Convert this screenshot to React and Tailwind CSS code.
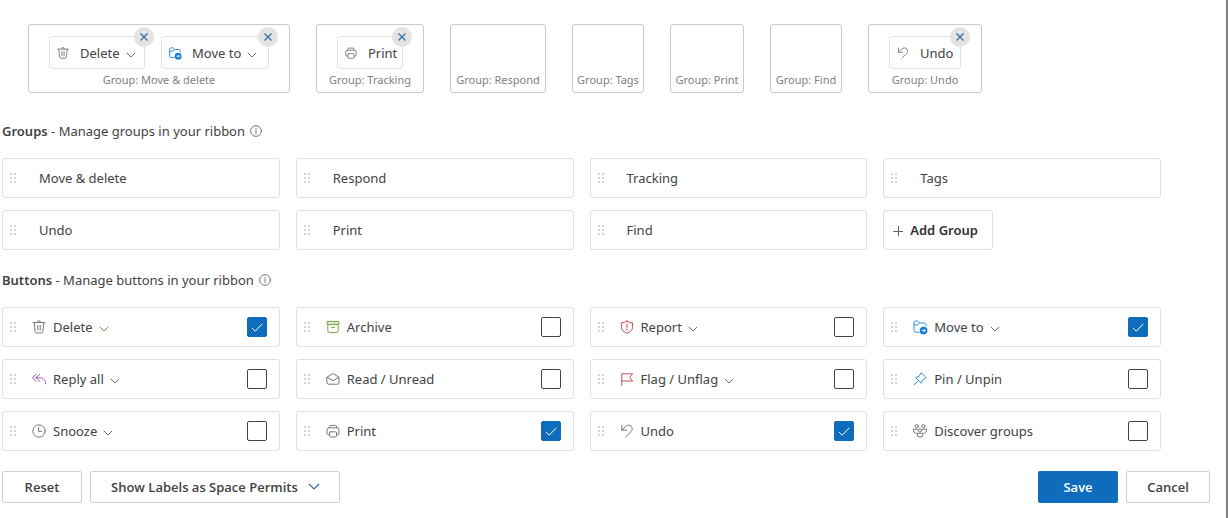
import React from "react";

const iconPaths = {
  trash: (
    <>
      <path d="M2.500 4.500h15M8 4.200a2 2 0 0 1 4 0M4 4.500l1.200 11.300a2 2 0 0 0 2 1.700h5.600a2 2 0 0 0 2-1.700L16 4.500" />
      <path d="M8.500 8v6M11.500 8v6" />
    </>
  ),
  move: (
    <>
      <path d="M9 16.500H4.500a2 2 0 0 1-2-2v-10a2 2 0 0 1 2-2H7l2.500 2.500h6a2 2 0 0 1 2 2V8.500" />
      <path d="M2.500 7.500H7L9.500 5" />
      <circle cx="14.500" cy="14.500" r="4.800" fill="#0f78d4" stroke="none" />
      <path d="M12.300 14.500h4.200M14.800 12.700l1.800 1.800-1.800 1.800" stroke="#fff" />
    </>
  ),
  print: (
    <>
      <path d="M5.500 6V4.500a1.500 1.500 0 0 1 1.500-1.500h6a1.500 1.500 0 0 1 1.500 1.500V6" />
      <path d="M5.500 14.500H4a1.500 1.500 0 0 1-1.500-1.500V8.500A2.500 2.500 0 0 1 5 6h10a2.500 2.500 0 0 1 2.500 2.500V13a1.500 1.500 0 0 1-1.500 1.500h-1.500" />
      <rect x="5.500" y="11" width="9" height="6.500" rx="1.500" />
    </>
  ),
  undo: <path d="M3.500 3v6h6M3.800 8.700l4.300-4.300c2.100-2 5-2.300 7-.4 2 2 1.800 5-.1 7L8.500 17.300" />,
  archive: (
    <>
      <rect x="2.500" y="3" width="15" height="4" rx="1" fill="#6aa33744" />
      <path d="M3.500 7v7.500a2.500 2.500 0 0 0 2.500 2.500h8a2.500 2.500 0 0 0 2.500-2.500V7M8 10.500h4" />
    </>
  ),
  report: (
    <path d="M10 2.500C12 4 14.200 4.700 17 4.800v5c0 3.800-2.400 6.300-7 8-4.600-1.700-7-4.200-7-8v-5c2.800-.1 5-.8 7-2.300ZM10 6v5M10 12.600v1.300" />
  ),
  replyAll: (
    <>
      <path d="M6.500 4 1.800 8.500l4.700 4.500M11 4 6.300 8.500l4.700 4.500" />
      <path d="M6.500 8.500h5c4 0 6.700 3 6.700 7.500" />
    </>
  ),
  mail: (
    <>
      <path d="M2.500 7.800 9.200 3.600a1.600 1.600 0 0 1 1.600 0l6.700 4.200v6.700a2 2 0 0 1-2 2h-11a2 2 0 0 1-2-2Z" />
      <path d="m2.700 8 7.300 4 7.300-4" />
    </>
  ),
  flag: <path d="M3.500 18V3.500h13.500L13.500 8l3.500 4.500H3.500" />,
  pin: (
    <>
      <path d="m12.300 2.800 4.900 4.900c.5.500.4 1.300-.3 1.600l-3.600 1.800-1.500 4.300L4.600 8.200l4.300-1.500 1.800-3.600c.3-.7 1.100-.8 1.600-.3Z" />
      <path d="m8 12-5.200 5.200" />
    </>
  ),
  clock: (
    <>
      <circle cx="10" cy="10" r="7.700" />
      <path d="M9.500 5.500v5h4" />
    </>
  ),
  people: (
    <>
      <circle cx="5.800" cy="4" r="2" />
      <circle cx="14.200" cy="4" r="2" />
      <circle cx="10" cy="9.300" r="2" />
      <path d="M6.500 12.800h7v1.400a3.500 3.500 0 0 1-7 0ZM7.200 7.800H1.700c0 3 1.300 4.900 3.300 5.200M12.800 7.800h5.500c0 3-1.300 4.900-3.300 5.200" />
    </>
  ),
  info: (
    <>
      <circle cx="10" cy="10" r="7.700" />
      <path d="M10 9v5M10 6v1.300" />
    </>
  ),
};

function Icon({ name, className = "size-4" }) {
  return (
    <svg
      viewBox="0 0 20 20"
      aria-hidden="true"
      className={`shrink-0 ${className}`}
      fill="none"
      stroke="currentColor"
      strokeWidth="1.200"
      strokeLinecap="round"
      strokeLinejoin="round"
    >
      {iconPaths[name]}
    </svg>
  );
}

function Chevron({ className = "w-2.5 text-[#616161]" }) {
  return (
    <svg viewBox="0 0 10 6" aria-hidden="true" className={`shrink-0 ${className}`} fill="none" stroke="currentColor">
      <path d="M.8.800 5 5 9.200.800" />
    </svg>
  );
}

function Grip() {
  return (
    <svg
      viewBox="0 0 6 10"
      aria-hidden="true"
      className="h-2.5 w-1.5 shrink-0"
      fill="#d6d6d6"
      shapeRendering="crispEdges"
    >
      {[0, 4, 8].map((y) => (
        <React.Fragment key={y}>
          <rect x="0" y={y} width="2" height="2" />
          <rect x="4" y={y} width="2" height="2" />
        </React.Fragment>
      ))}
    </svg>
  );
}

const ribbon = [
  {
    name: "Move & delete",
    width: "min-w-[262px]",
    items: [
      { label: "Delete", icon: "trash", menu: true, width: "min-w-24" },
      { label: "Move to", icon: "move", menu: true, color: "text-[#0f7fd6]", width: "min-w-27" },
    ],
  },
  { name: "Tracking", width: "min-w-27", items: [{ label: "Print", icon: "print", width: "min-w-[66px]" }] },
  { name: "Respond", width: "min-w-24", items: [] },
  { name: "Tags", width: "min-w-18", items: [] },
  { name: "Print", width: "min-w-[74px]", items: [] },
  { name: "Find", width: "min-w-18", items: [] },
  { name: "Undo", width: "min-w-[114px]", items: [{ label: "Undo", icon: "undo", width: "min-w-18" }] },
];

const groups = ["Move & delete", "Respond", "Tracking", "Tags", "Undo", "Print", "Find"];

const buttons = [
  { label: "Delete", icon: "trash", menu: "text-[#a87850]", checked: true },
  { label: "Archive", icon: "archive", color: "text-[#6aa337]" },
  { label: "Report", icon: "report", menu: "text-[#707070]", color: "text-[#c4474f]" },
  { label: "Move to", icon: "move", menu: "text-[#707070]", color: "text-[#2b8fe0]", checked: true },
  { label: "Reply all", icon: "replyAll", menu: "text-[#80607a]", color: "text-[#9a4bb5]" },
  { label: "Read / Unread", icon: "mail" },
  { label: "Flag / Unflag", icon: "flag", menu: "text-[#707070]", color: "text-[#c4474f]" },
  { label: "Pin / Unpin", icon: "pin", color: "text-[#2b8fe0]" },
  { label: "Snooze", icon: "clock", menu: "text-[#7a6a66]" },
  { label: "Print", icon: "print", checked: true },
  { label: "Undo", icon: "undo", checked: true },
  { label: "Discover groups", icon: "people" },
];

function Chip({ item }) {
  return (
    <div className={`relative flex h-[33px] items-center rounded border border-[#e0e0e0] pl-[5px] ${item.width}`}>
      <Icon name={item.icon} className={`size-4 p-px ${item.color || "text-[#707070]"}`} />
      <span className="ml-[9px]">{item.label}</span>
      {item.menu && <Chevron className="mt-1 ml-1.5 w-2.5 text-[#707070]" />}
      <button
        type="button"
        aria-label={`Remove ${item.label}`}
        className="absolute -top-2.5 -right-2.5 flex size-5 items-center justify-center rounded-full bg-[#e3e3e3] text-[#2f6ca3]"
      >
        <svg viewBox="0 0 8 8" aria-hidden="true" className="size-2" fill="none" stroke="currentColor" strokeWidth="1.200">
          <path d="m.5.500 7 7M7.500.500l-7 7" />
        </svg>
      </button>
    </div>
  );
}

function SectionTitle({ title, text }) {
  return (
    <div className="flex h-5 items-center gap-1">
      <h2 className="font-normal">
        <strong className="font-semibold">{title}</strong> - {text}
      </h2>
      <Icon name="info" className="size-3.5 text-[#616161]" />
    </div>
  );
}

function ButtonCard({ item }) {
  return (
    <label className="flex h-10 items-center rounded-[3px] border border-[#e0e0e0] pr-3 pl-[7px]">
      <Grip />
      <Icon name={item.icon} className={`ml-[15px] size-4 ${item.color || "text-[#707070]"}`} />
      <span className="ml-1.5">{item.label}</span>
      {item.menu && <Chevron className={`mt-1 ml-1.5 w-2.5 ${item.menu}`} />}
      <span className="ml-auto grid size-5 place-items-center">
        <input
          type="checkbox"
          defaultChecked={item.checked}
          className="peer col-start-1 row-start-1 size-5 appearance-none rounded-[2px] border border-[#424242] checked:border-[#0f6cbd] checked:bg-[#0f6cbd]"
        />
        <svg
          viewBox="0 0 12 9"
          aria-hidden="true"
          className="pointer-events-none col-start-1 row-start-1 hidden w-3 peer-checked:block"
          fill="none"
          stroke="#fff"
        >
          <path d="M.8 4.800 4.200 8.200 11.300.800" />
        </svg>
      </span>
    </label>
  );
}

export default function App() {
  return (
    <main className="min-h-screen border-r-2 border-[#808080] bg-white pt-6 pr-4 pb-[15px] pl-0.5 font-['Noto_Sans','Open_Sans',sans-serif] text-[13px] leading-5 text-[#424242]">
      <section aria-label="Ribbon preview" className="flex flex-wrap gap-[26px] pl-[26px]">
        {ribbon.map((group) => (
          <div
            key={group.name}
            className={`flex h-[69px] flex-col items-center justify-between rounded-[3px] border border-[#c9c9c9] px-0.5 pt-[11px] pb-1 ${group.width}`}
          >
            <div className="flex h-[33px] gap-4">
              {group.items.map((item) => (
                <Chip key={item.label} item={item} />
              ))}
            </div>
            <span className="text-[11px] leading-4 whitespace-nowrap text-[#808080]">Group: {group.name}</span>
          </div>
        ))}
      </section>

      <section className="mt-7 mr-[49px]">
        <SectionTitle title="Groups" text="Manage groups in your ribbon" />
        <div className="mt-[17px] grid grid-cols-4 gap-x-4 gap-y-3">
          {groups.map((name) => (
            <div key={name} className="flex h-10 items-center rounded-[3px] border border-[#e0e0e0] pl-[7px]">
              <Grip />
              <span className="ml-[23px]">{name}</span>
            </div>
          ))}
          <button
            type="button"
            className="flex h-10 w-[110px] items-center gap-[7px] rounded-[3px] border border-[#e0e0e0] pl-[9px] font-semibold whitespace-nowrap text-[#303030]"
          >
            <svg viewBox="0 0 10 10" aria-hidden="true" className="mt-0.5 size-2.5 shrink-0" fill="none" stroke="#616161">
              <path d="M0 5.500h10M5.500 0v10" />
            </svg>
            Add Group
          </button>
        </div>
      </section>

      <section className="mt-5 mr-[49px]">
        <SectionTitle title="Buttons" text="Manage buttons in your ribbon" />
        <div className="mt-[17px] grid grid-cols-4 gap-x-4 gap-y-3">
          {buttons.map((item) => (
            <ButtonCard key={item.label} item={item} />
          ))}
        </div>
      </section>

      <footer className="mt-5 flex gap-2 font-['Open_Sans',sans-serif] font-semibold">
        <button type="button" className="h-8 w-20 rounded-[2px] border border-[#d1d1d1]">
          Reset
        </button>
        <div className="grid w-[250px] items-center">
          <select
            aria-label="Label display"
            className="col-start-1 row-start-1 h-8 w-full appearance-none rounded-[2px] border border-[#d1d1d1] bg-white pr-8 pl-5"
          >
            <option>Show Labels as Space Permits</option>
            <option>Always Show Labels</option>
            <option>Never Show Labels</option>
          </select>
          <Chevron className="pointer-events-none col-start-1 row-start-1 mr-5 w-3 justify-self-end text-[#2f6ca3]" />
        </div>
        <button type="button" className="ml-auto h-8 w-20 rounded-[2px] bg-[#0f6cbd] text-white">
          Save
        </button>
        <button type="button" className="h-8 w-[84px] rounded-[2px] border border-[#d1d1d1]">
          Cancel
        </button>
      </footer>
    </main>
  );
}
